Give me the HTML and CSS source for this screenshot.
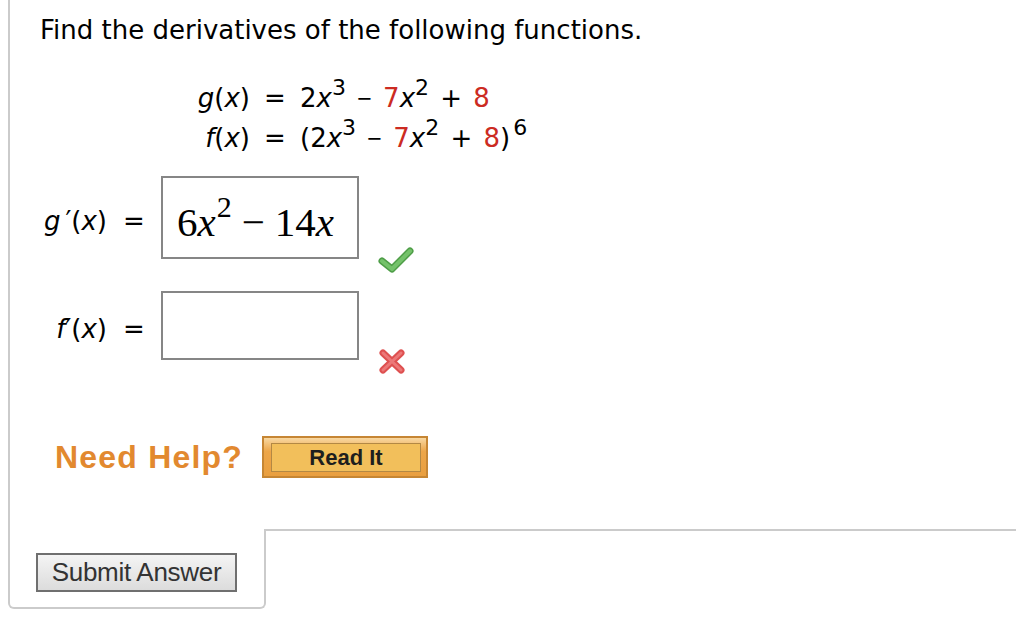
FILE: index.html
```html
<!DOCTYPE html>
<html lang="en">
<head>
<meta charset="utf-8">
<title>Derivatives</title>
<link rel="stylesheet" href="styles.css">
</head>
<body>
<div class="panel">
  <p class="title">Find the derivatives of the following functions.</p>
  <div class="eqs">
    <div class="lhs"><i>g</i>(<i>x</i>)</div>
    <div class="eq">=</div>
    <div class="rhs">2<i>x</i><sup>3</sup> <span class="minus">−</span> <span class="red">7</span><i>x</i><sup>2</sup> + <span class="red">8</span></div>
    <div class="lhs"><i>f</i>(<i>x</i>)</div>
    <div class="eq">=</div>
    <div class="rhs">(2<i>x</i><sup>3</sup> <span class="minus">−</span> <span class="red">7</span><i>x</i><sup>2</sup> + <span class="red">8</span>)<sup class="outer">6</sup></div>
  </div>
  <div class="answers">
    <div class="alabel"><i>g</i><span class="gprime">′</span>(<i>x</i>)</div>
    <div class="aeq">=</div>
    <div class="box box-tall"><span class="mj">6<i>x</i><sup>2</sup><span class="mo">−</span>14<i>x</i></span></div>
    <div class="mark mark-ok">
      <svg width="36" height="26" viewBox="0 0 36 26">
        <polyline points="4,14 14,22 32,4" fill="none" stroke="#4f9e48" stroke-width="7" stroke-linecap="round" stroke-linejoin="round"/>
        <polyline points="4,14 14,22 32,4" fill="none" stroke="#74c26a" stroke-width="4" stroke-linecap="round" stroke-linejoin="round"/>
      </svg>
    </div>
    <div class="alabel"><i>f</i>′(<i>x</i>)</div>
    <div class="aeq">=</div>
    <div class="box box-short"></div>
    <div class="mark mark-bad">
      <svg width="28" height="27" viewBox="0 0 28 27">
        <path d="M5 5 L23 22 M23 5 L5 22" fill="none" stroke="#de5050" stroke-width="7" stroke-linecap="round"/>
        <path d="M5 5 L23 22 M23 5 L5 22" fill="none" stroke="#ec7878" stroke-width="3" stroke-linecap="round"/>
      </svg>
    </div>
  </div>
  <div class="help">
    <span class="need">Need Help?</span>
    <div class="readit"><span>Read It</span></div>
  </div>
</div>
<div class="foot">
  <div class="tab"><button class="submit" type="button">Submit Answer</button></div>
  <div class="rest"></div>
</div>
</body>
</html>
```

FILE: styles.css
```css
html, body {
  margin: 0;
  padding: 0;
  background: #fff;
}
body {
  width: 1016px;
  height: 632px;
  overflow: hidden;
  font-family: "DejaVu Sans", Verdana, sans-serif;
  color: #000;
}
i { font-style: italic; }

.panel {
  margin-left: 8px;
  border-left: 2px solid #cbcbcb;
  padding: 15px 0 51px 30px;
}
.title {
  margin: 0;
  font-size: 26px;
  line-height: 30px;
}

.eqs {
  display: grid;
  grid-template-columns: 210px 50px auto;
  margin-top: 33px;
  font-size: 26px;
  line-height: 40px;
}
.lhs { text-align: right; }
.eq { text-align: center; }
.rhs { white-space: nowrap; word-spacing: 3px; }
.eqs sup {
  font-size: 22px;
  line-height: 0;
  vertical-align: 12px;
}
.eqs sup.outer { margin-left: 3px; }
.minus {
  font-family: "Liberation Sans", Arial, sans-serif;
  font-size: 25px;
}
.red { color: #cc2b22; }

.answers {
  display: grid;
  grid-template-columns: 70px 54px 198px auto;
  row-gap: 32px;
  margin: 18px 0 0 -3px;
  font-size: 26px;
}
.alabel {
  text-align: right;
  align-self: center;
  padding-top: 7px;
  line-height: 30px;
  white-space: nowrap;
}
.gprime { margin-left: 5px; }
.aeq {
  text-align: center;
  align-self: center;
  padding-top: 7px;
  line-height: 30px;
}
.box {
  border: 2px solid #868686;
  box-sizing: border-box;
  background: #fff;
}
.box-tall {
  height: 83px;
  padding: 23px 0 0 14px;
}
.box-short { height: 69px; }
.mj {
  font-family: "Liberation Serif", "Times New Roman", serif;
  font-size: 41px;
  line-height: 42px;
  white-space: nowrap;
}
.mj sup {
  font-size: 30px;
  line-height: 0;
  vertical-align: 19px;
  margin-left: 1px;
}
.mo { margin: 0 10px; }

.mark {
  align-self: end;
  line-height: 0;
  margin-left: 19px;
}
.mark-ok { margin-bottom: -14px; }
.mark-bad { margin-bottom: -15px; }

.help {
  display: flex;
  align-items: center;
  gap: 19px;
  margin-top: 76px;
  padding-left: 15px;
}
.need {
  font-family: "Liberation Sans", Arial, sans-serif;
  font-weight: bold;
  font-size: 32px;
  letter-spacing: 1.2px;
  line-height: 36px;
  color: #e2892f;
}
.readit {
  width: 166px;
  height: 42px;
  box-sizing: border-box;
  border: 2px solid #c68634;
  background: linear-gradient(#f8d8a2 0, #eda649 35%, #e99f40 100%);
  padding: 5px 5px 4px 7px;
}
.readit span {
  display: flex;
  align-items: center;
  justify-content: center;
  height: 100%;
  box-sizing: border-box;
  border: 1px solid #b38844;
  background: #f2bf5b;
  font-family: "Liberation Sans", Arial, sans-serif;
  font-weight: bold;
  font-size: 22px;
  color: #1e1e1e;
}

.foot {
  display: flex;
  margin-left: 8px;
}
.tab {
  border: 2px solid #cbcbcb;
  border-top: none;
  border-radius: 0 0 6px 6px;
  padding: 24px 27px 15px 26px;
}
.submit {
  display: block;
  width: 201px;
  height: 39px;
  box-sizing: border-box;
  margin: 0;
  padding: 0;
  border: 2px solid #6f6f6f;
  border-radius: 0;
  background: linear-gradient(#f4f4f4, #dcdcdc);
  font-family: "Liberation Sans", Arial, sans-serif;
  font-size: 26px;
  letter-spacing: -0.3px;
  color: #333;
}
.rest {
  flex: 1;
  align-self: flex-start;
  border-top: 2px solid #cbcbcb;
}
```
